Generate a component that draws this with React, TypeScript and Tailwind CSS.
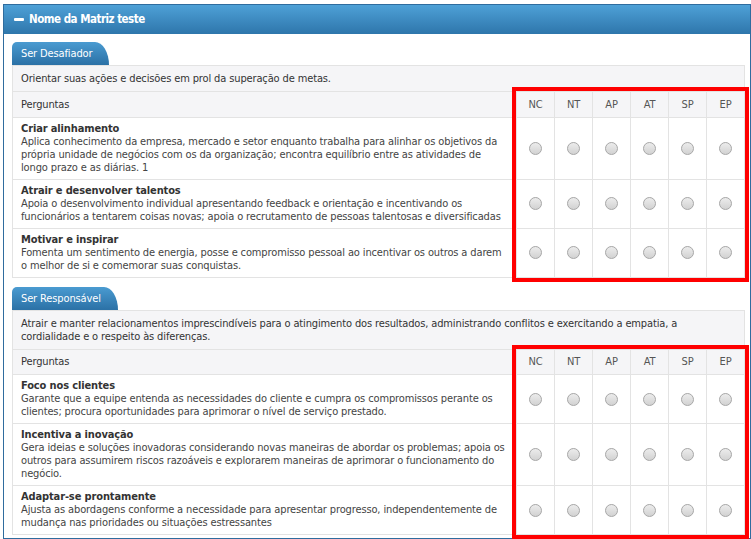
import React from "react";

type Question = { title: string; text: string };
type Section = { tab: string; desc: string; questions: Question[] };

const sections: Section[] = [
  {
    tab: "Ser Desafiador",
    desc: "Orientar suas ações e decisões em prol da superação de metas.",
    questions: [
      {
        title: "Criar alinhamento",
        text: "Aplica conhecimento da empresa, mercado e setor enquanto trabalha para alinhar os objetivos da própria unidade de negócios com os da organização; encontra equilíbrio entre as atividades de longo prazo e as diárias. 1",
      },
      {
        title: "Atrair e desenvolver talentos",
        text: "Apoia o desenvolvimento individual apresentando feedback e orientação e incentivando os funcionários a tentarem coisas novas; apoia o recrutamento de pessoas talentosas e diversificadas",
      },
      {
        title: "Motivar e inspirar",
        text: "Fomenta um sentimento de energia, posse e compromisso pessoal ao incentivar os outros a darem o melhor de si e comemorar suas conquistas.",
      },
    ],
  },
  {
    tab: "Ser Responsável",
    desc: "Atrair e manter relacionamentos imprescindíveis para o atingimento dos resultados, administrando conflitos e exercitando a empatia, a cordialidade e o respeito às diferenças.",
    questions: [
      {
        title: "Foco nos clientes",
        text: "Garante que a equipe entenda as necessidades do cliente e cumpra os compromissos perante os clientes; procura oportunidades para aprimorar o nível de serviço prestado.",
      },
      {
        title: "Incentiva a inovação",
        text: "Gera ideias e soluções inovadoras considerando novas maneiras de abordar os problemas; apoia os outros para assumirem riscos razoáveis e explorarem maneiras de aprimorar o funcionamento do negócio.",
      },
      {
        title: "Adaptar-se prontamente",
        text: "Ajusta as abordagens conforme a necessidade para apresentar progresso, independentemente de mudança nas prioridades ou situações estressantes",
      },
    ],
  },
];

const scale = ["NC", "NT", "AP", "AT", "SP", "EP"];

const Radio = () => (
  <span className="inline-block w-[13px] h-[13px] rounded-full border border-[#a8a8a8] bg-linear-to-b from-[#ececec] to-[#d2d2d2] align-middle" />
);

const MatrixSection = ({ section, first }: { section: Section; first: boolean }) => (
  <div className={first ? "" : "mt-[9px]"}>
    <div className="flex">
      <div className="h-[23px] flex items-center pl-[9px] pr-[17px] rounded-tl-[5px] rounded-tr-[14px_23px] bg-linear-to-b from-[#4a9bd1] to-[#2b71a6] text-white">
        {section.tab}
      </div>
    </div>
    <div className="border border-[#e3e3e3] bg-[#f5f5f7] px-[8px] py-[6px] text-[#333]">
      {section.desc}
    </div>
    <div className="relative">
      <table className="w-full table-fixed border-collapse">
        <colgroup>
          <col />
          {scale.map((s) => (
            <col key={s} className="w-[38px]" />
          ))}
        </colgroup>
        <thead>
          <tr className="bg-[#f5f5f7]">
            <th className="border border-t-0 border-[#e3e3e3] h-[25px] px-[8px] text-left font-normal text-[#333]">
              Perguntas
            </th>
            {scale.map((s) => (
              <th
                key={s}
                className="border border-t-0 border-[#e3e3e3] font-normal text-[#555]"
              >
                {s}
              </th>
            ))}
          </tr>
        </thead>
        <tbody>
          {section.questions.map((q) => (
            <tr key={q.title}>
              <td className="border border-[#e3e3e3] px-[8px] pt-[4px] pb-[5px] align-top">
                <div className="font-bold text-[#333]">{q.title}</div>
                <div className="text-[#444]">{q.text}</div>
              </td>
              {scale.map((s) => (
                <td key={s} className="border border-[#e3e3e3] text-center">
                  <Radio />
                </td>
              ))}
            </tr>
          ))}
        </tbody>
      </table>
      <div className="absolute -top-[5px] -bottom-[4px] -right-[4px] w-[237px] border-4 border-[#ff0000] pointer-events-none" />
    </div>
  </div>
);

export default function App() {
  return (
    <div className="bg-white min-h-[539px] pt-[4px] font-['Tahoma','DejaVu_Sans_Condensed','DejaVu_Sans',sans-serif] text-[11px] leading-[13px] tracking-[-0.13px]">
      <div className="ml-[3px] w-[748px] border border-[#2f6c9e] border-b">
        <div className="h-[29px] flex items-center gap-[5px] pl-[10px] bg-linear-to-b from-[#4ea1d7] to-[#2e76ab] text-white font-bold text-[11.5px] tracking-[-0.5px]">
          <span className="inline-block w-[10px] h-[3px] rounded-[1px] bg-white" />
          Nome da Matriz teste
        </div>
        <div className="pl-[8px] pr-[5px] pt-[8px] pb-[3px]">
          {sections.map((s, i) => (
            <MatrixSection key={s.tab} section={s} first={i === 0} />
          ))}
        </div>
      </div>
    </div>
  );
}
